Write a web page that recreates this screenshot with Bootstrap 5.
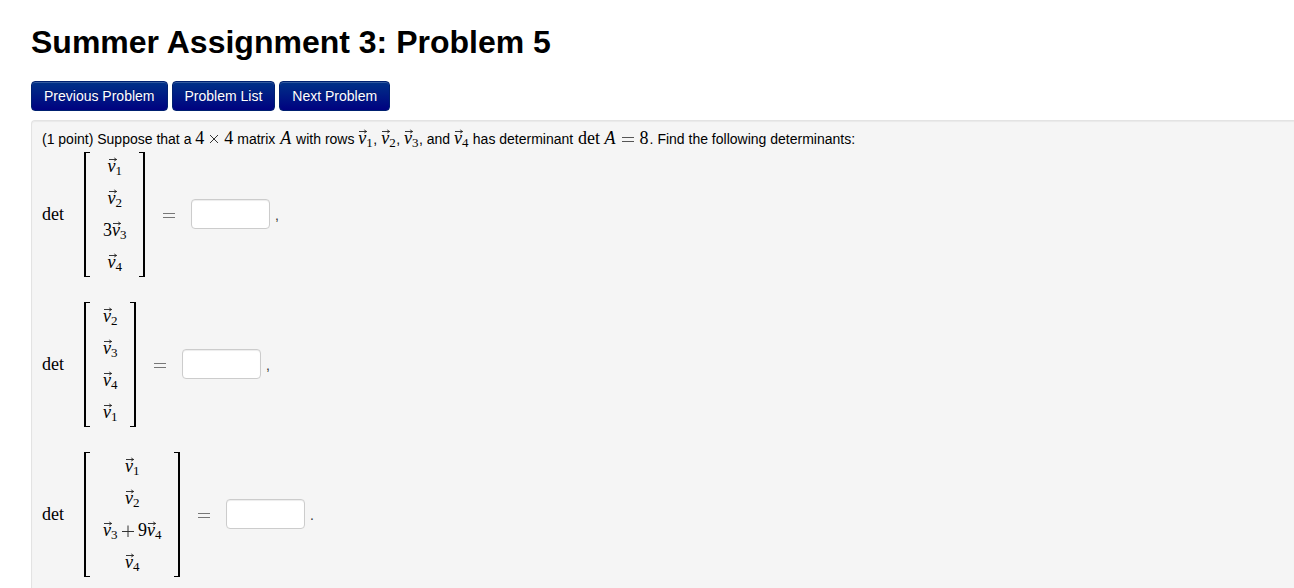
<!DOCTYPE html>
<html lang="en">
<head>
<meta charset="utf-8">
<meta name="viewport" content="width=device-width, initial-scale=1">
<title>Summer Assignment 3: Problem 5</title>
<link rel="stylesheet" href="https://cdn.jsdelivr.net/npm/bootstrap@5.3.0/dist/css/bootstrap.min.css">
<style>
  body { font: 14px/20px "Liberation Sans", Arial, sans-serif; color: #000; background: #fff; }
  .page { padding: 22px 0 0 31px; }
  .page-title { font-size: 32px; line-height: 40px; font-weight: 700; margin: 0 0 19px; }
  .problem-nav { gap: 4px; margin-bottom: 9px; }
  .btn-nav {
    --bs-btn-color: #fff; --bs-btn-hover-color: #fff; --bs-btn-active-color: #fff;
    --bs-btn-font-size: 14px; --bs-btn-line-height: 20px;
    --bs-btn-padding-x: 12px; --bs-btn-padding-y: 4px; --bs-btn-border-radius: 4px;
    --bs-btn-border-color: #002070;
    background: linear-gradient(#003388, #000080) border-box;
    box-shadow: inset 0 1px 0 rgba(255,255,255,.2);
    text-shadow: 0 -1px 0 rgba(0,0,0,.25);
  }
  .problem-body {
    background: #f5f5f5; border: 1px solid #e3e3e3; border-right: 0;
    border-radius: 4px 0 0 4px; padding: 7px 0 19px 10px;
    box-shadow: inset 0 1px 1px rgba(0,0,0,.05);
  }
  .statement { margin: 0 0 3px; }
  .statement .symbol { margin: 0 1px; }
  .mth { font-family: "Liberation Serif", "Times New Roman", serif; font-size: 18px; line-height: 20px; white-space: nowrap; }
  .mth i { font-style: italic; }
  .op { display: inline-block; width: 12px; height: 12px; margin: 0 4px; vertical-align: -1px; fill: none; stroke: #333; }
  .op.rel { margin: 0 6px; stroke: #555; }
  .vec { position: relative; display: inline-block; width: 15px; text-align: left; }
  .vec svg { position: absolute; left: 1px; top: 1px; width: 8px; height: 5px; fill: none; stroke: #222; }
  .vec b { font-size: 13px; font-weight: 400; position: absolute; left: 8px; top: 5px; }
  .equation { height: 124px; margin-bottom: 26px; }
  .equation:last-child { margin-bottom: 0; }
  .det-name { width: 42px; }
  .matrix { position: relative; padding: 0 18px 0 19px; height: 125px; }
  .matrix::before, .matrix::after { content: ""; position: absolute; top: 0; bottom: 0; width: 6px; border: solid #000; border-width: 1px 0 1px 2px; }
  .matrix::before { left: 0; }
  .matrix::after { right: 0; border-width: 1px 2px 1px 0; }
  .matrix div { height: 32px; padding-top: 4px; }
  .equation > .op { margin: 2px 16px 0 18px; stroke: #777; }
  .answer { width: 79px; height: 30px; padding: 4px 6px; font-size: 14px; border: 1px solid #ccc; border-radius: 4px; box-shadow: inset 0 1px 1px rgba(0,0,0,.075); }
  .stop { margin: 2px 0 0 5px; color: #333; }
</style>
</head>
<body>
<svg class="d-none" aria-hidden="true">
  <symbol id="arrow" viewBox="0 0 8 5"><path d="M0 2.5H7.5M5.5 .7Q6 2.3 7.7 2.5Q6 2.7 5.5 4.3" stroke-width=".9"/></symbol>
  <symbol id="eq" viewBox="0 0 12 12"><path d="M0 4.5H12M0 8.5H12"/></symbol>
  <symbol id="plus" viewBox="0 0 12 12"><path d="M0 6.5H12M6 .5V12"/></symbol>
  <symbol id="times" viewBox="0 0 12 12"><path d="M2 2L10 10M10 2L2 10"/></symbol>
</svg>
<main class="page">
  <h1 class="page-title">Summer Assignment 3: Problem 5</h1>
  <nav class="problem-nav d-flex flex-wrap" aria-label="Problems">
    <button type="button" class="btn btn-nav">Previous Problem</button>
    <button type="button" class="btn btn-nav">Problem List</button>
    <button type="button" class="btn btn-nav">Next Problem</button>
  </nav>
  <form class="problem-body">
    <p class="statement">(1 point) Suppose that a <span class="mth">4<svg class="op"><use href="#times"/></svg>4</span> matrix <span class="mth symbol"><i>A</i></span> with rows <span class="mth vec"><svg><use href="#arrow"/></svg><i>v</i><b>1</b></span>, <span class="mth vec"><svg><use href="#arrow"/></svg><i>v</i><b>2</b></span>, <span class="mth vec"><svg><use href="#arrow"/></svg><i>v</i><b>3</b></span>, and <span class="mth vec"><svg><use href="#arrow"/></svg><i>v</i><b>4</b></span> has determinant <span class="mth symbol">det <i>A</i><svg class="op rel"><use href="#eq"/></svg>8</span>. Find the following determinants:</p>

    <div class="equation d-flex align-items-center">
      <label class="mth det-name" for="a1">det</label>
      <div class="matrix mth text-center align-self-start">
        <div><span class="vec"><svg><use href="#arrow"/></svg><i>v</i><b>1</b></span></div>
        <div><span class="vec"><svg><use href="#arrow"/></svg><i>v</i><b>2</b></span></div>
        <div>3<span class="vec"><svg><use href="#arrow"/></svg><i>v</i><b>3</b></span></div>
        <div><span class="vec"><svg><use href="#arrow"/></svg><i>v</i><b>4</b></span></div>
      </div>
      <svg class="op"><use href="#eq"/></svg>
      <input type="text" class="answer" id="a1"><span class="stop">,</span>
    </div>

    <div class="equation d-flex align-items-center">
      <label class="mth det-name" for="a2">det</label>
      <div class="matrix mth text-center align-self-start">
        <div><span class="vec"><svg><use href="#arrow"/></svg><i>v</i><b>2</b></span></div>
        <div><span class="vec"><svg><use href="#arrow"/></svg><i>v</i><b>3</b></span></div>
        <div><span class="vec"><svg><use href="#arrow"/></svg><i>v</i><b>4</b></span></div>
        <div><span class="vec"><svg><use href="#arrow"/></svg><i>v</i><b>1</b></span></div>
      </div>
      <svg class="op"><use href="#eq"/></svg>
      <input type="text" class="answer" id="a2"><span class="stop">,</span>
    </div>

    <div class="equation d-flex align-items-center">
      <label class="mth det-name" for="a3">det</label>
      <div class="matrix mth text-center align-self-start">
        <div><span class="vec"><svg><use href="#arrow"/></svg><i>v</i><b>1</b></span></div>
        <div><span class="vec"><svg><use href="#arrow"/></svg><i>v</i><b>2</b></span></div>
        <div><span class="vec"><svg><use href="#arrow"/></svg><i>v</i><b>3</b></span><svg class="op"><use href="#plus"/></svg>9<span class="vec"><svg><use href="#arrow"/></svg><i>v</i><b>4</b></span></div>
        <div><span class="vec"><svg><use href="#arrow"/></svg><i>v</i><b>4</b></span></div>
      </div>
      <svg class="op"><use href="#eq"/></svg>
      <input type="text" class="answer" id="a3"><span class="stop">.</span>
    </div>
  </form>
</main>
<script src="https://cdn.jsdelivr.net/npm/bootstrap@5.3.0/dist/js/bootstrap.bundle.min.js"></script>
</body>
</html>
